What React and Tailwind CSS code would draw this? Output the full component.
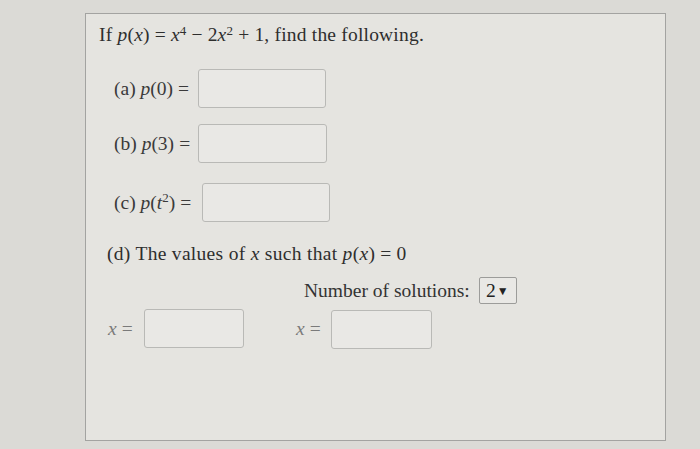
import React from 'react';

const serif = { fontFamily: '"Liberation Serif", "DejaVu Serif", serif' };

function Box({ className = '' }) {
  return (
    <div className={`h-[39px] rounded-[3px] border border-[#b9b9b6] bg-[#e9e8e5] ${className}`} />
  );
}

function V({ children }) {
  return <i className="italic">{children}</i>;
}

function Sup({ children }) {
  return <sup className="text-[13px]">{children}</sup>;
}

// operador con espacio tipo TeX
function Op({ children }) {
  return <span className="mx-[5px]">{children}</span>;
}

export default function App() {
  return (
    <div className="w-[700px] h-[449px] overflow-hidden bg-[#dbdad6] text-[#333] text-[19.5px]" style={serif}>
      <div className="ml-[85px] mt-[13px] w-[581px] h-[428px] border border-[#a3a3a1] bg-[#e5e4e0] pl-[13px]">
        {/* Pregunta */}
        <div className="mt-[9px] h-[24px] leading-[24px] text-[#2e2e2e] tracking-[0.2px]">
          If <V>p</V>(<V>x</V>)<Op>=</Op><V>x</V><Sup>4</Sup><Op>−</Op>2<V>x</V><Sup>2</Sup><Op>+</Op>1, find the following.
        </div>

        {/* (a) */}
        <div className="mt-[22px] flex items-center pl-[15px]">
          <span className="w-[84px] text-[#3a3a3a]">(a) <V>p</V>(0)<span className="ml-[5px]">=</span></span>
          <Box className="w-[128px]" />
        </div>

        {/* (b) */}
        <div className="mt-[16px] flex items-center pl-[15px]">
          <span className="w-[84px] text-[#3a3a3a]">(b) <V>p</V>(3)<span className="ml-[5px]">=</span></span>
          <Box className="w-[129px]" />
        </div>

        {/* (c) */}
        <div className="mt-[20px] flex items-center pl-[15px]">
          <span className="w-[88px] text-[#3a3a3a]">(c) <V>p</V>(<V>t</V><Sup>2</Sup>)<span className="ml-[5px]">=</span></span>
          <Box className="w-[128px]" />
        </div>

        {/* (d) */}
        <div className="mt-[20px] h-[24px] leading-[24px] pl-[8px] text-[#2e2e2e] tracking-[0.3px]">
          (d) The values of <V>x</V> such that <V>p</V>(<V>x</V>)<Op>=</Op>0
        </div>

        <div className="mt-[10px] flex items-center pl-[205px]">
          <span className="w-[175px] text-[#333]">Number of solutions:</span>
          <div className="h-[27px] w-[38px] rounded-[2px] border border-[#9c9c9a] bg-[#e9e8e5] flex items-center pl-[6px] text-[#222]">
            2<span className="text-[12px] ml-[1px]">▼</span>
          </div>
        </div>

        <div className="mt-[2px] flex items-center pl-[9px]">
          <span className="w-[36px] text-[#7a7a7a]"><V>x</V><span className="ml-[5px]">=</span></span>
          <Box className="w-[100px]" />
          <span className="ml-[52px] w-[35px] text-[#7a7a7a]"><V>x</V><span className="ml-[5px]">=</span></span>
          <Box className="w-[101px] mt-[3px]" />
        </div>
      </div>
    </div>
  );
}
